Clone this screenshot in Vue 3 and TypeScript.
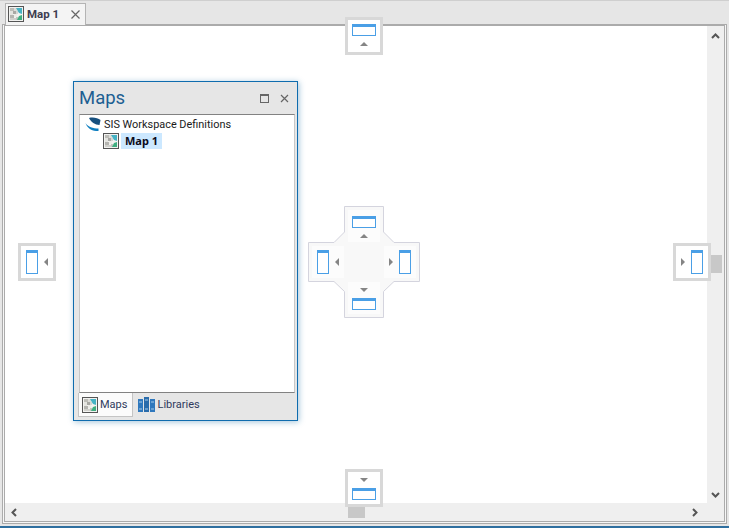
<script setup lang="ts">
// dock guides around the edge of the document well
const edgeGuides = ['top', 'left', 'right', 'bottom'] as const;

// rough little map thumbnail used on tabs and tree nodes
const mapCells = [
  { x: 2, y: 2, w: 4, h: 3, fill: '#bdbdb8' },
  { x: 6, y: 2, w: 3, h: 3, fill: '#dcdcd8' },
  { x: 2, y: 5, w: 3, h: 4, fill: '#e4e4e0' },
  { x: 5, y: 5, w: 3, h: 3, fill: '#a8a8a4' },
  { x: 8, y: 5, w: 2, h: 3, fill: '#d6d6d2' },
  { x: 2, y: 9, w: 4, h: 3, fill: '#b4b4b0' },
  { x: 6, y: 8, w: 3, h: 3, fill: '#ecece8' },
  { x: 2, y: 12, w: 6, h: 2, fill: '#d0d0cc' },
  { x: 8, y: 11, w: 2, h: 3, fill: '#c4c4c0' },
];
</script>

<template>
  <div class="app">
    <div class="tabstrip">
      <div class="doc-tab">
        <svg class="map-icon" width="16" height="16" viewBox="0 0 16 16">
          <rect x="0.5" y="0.5" width="15" height="15" fill="#f2f2f0" stroke="#555" />
          <rect v-for="(c, i) in mapCells" :key="i" :x="c.x" :y="c.y" :width="c.w" :height="c.h" :fill="c.fill" />
          <path d="M8 2H14V8L11 7Z" fill="#45b2c4" />
          <path d="M14 9V14H9L11 10Z" fill="#3fae80" />
        </svg>
        <span class="doc-tab-label">Map 1</span>
        <svg class="doc-close" width="9" height="9" viewBox="0 0 9 9">
          <path d="M0.5 0.5L8.5 8.5M8.5 0.5L0.5 8.5" stroke="#666" stroke-width="1.2" fill="none" />
        </svg>
      </div>
    </div>

    <div class="frame-outer">
      <div class="frame-inner">
        <div class="well-row">
          <div class="well"></div>
          <div class="vscroll">
            <svg width="9" height="6" viewBox="0 0 9 6"><path d="M1 5L4.5 1.5L8 5" stroke="#555" stroke-width="2" fill="none" /></svg>
            <div class="vthumb"></div>
            <svg width="9" height="6" viewBox="0 0 9 6"><path d="M1 1L4.5 4.5L8 1" stroke="#555" stroke-width="2" fill="none" /></svg>
          </div>
        </div>
        <div class="hscroll">
          <svg width="6" height="9" viewBox="0 0 6 9"><path d="M5 1L1.5 4.5L5 8" stroke="#555" stroke-width="2" fill="none" /></svg>
          <div class="hthumb"></div>
          <svg width="6" height="9" viewBox="0 0 6 9"><path d="M1 1L4.5 4.5L1 8" stroke="#555" stroke-width="2" fill="none" /></svg>
        </div>
      </div>
    </div>
    <div class="bottom-edge"></div>

    <!-- floating tool window -->
    <div class="float-win">
      <div class="float-head">
        <span class="float-title">Maps</span>
        <svg class="float-max" width="9" height="9" viewBox="0 0 9 9">
          <rect x="0.5" y="0.5" width="8" height="8" fill="none" stroke="#666" />
          <path d="M0 1.5H9" stroke="#666" />
        </svg>
        <svg class="float-close" width="9" height="9" viewBox="0 0 9 9">
          <path d="M1 1L8 8M8 1L1 8" stroke="#666" stroke-width="1.2" fill="none" />
        </svg>
      </div>
      <div class="tree">
        <div class="tree-root">
          <svg width="16" height="14" viewBox="0 0 16 14">
            <path d="M4 1C8 0 13 1 15.5 3L14.5 8C10 8 6 5 4 1Z" fill="#17507f" />
            <path d="M0.5 6C3 10 8 11.5 13.5 11.5L13.5 14C7 14.5 2 11 0.5 6Z" fill="#0f7fc0" />
          </svg>
          <span>SIS Workspace Definitions</span>
        </div>
        <div class="tree-node">
          <svg class="map-icon" width="16" height="16" viewBox="0 0 16 16">
            <rect x="0.5" y="0.5" width="15" height="15" fill="#f2f2f0" stroke="#555" />
            <rect v-for="(c, i) in mapCells" :key="i" :x="c.x" :y="c.y" :width="c.w" :height="c.h" :fill="c.fill" />
            <path d="M8 2H14V8L11 7Z" fill="#45b2c4" />
            <path d="M14 9V14H9L11 10Z" fill="#3fae80" />
          </svg>
          <span class="tree-selected">Map 1</span>
        </div>
      </div>
      <div class="float-tabs">
        <div class="float-tab active">
          <svg class="map-icon" width="16" height="16" viewBox="0 0 16 16">
            <rect x="0.5" y="0.5" width="15" height="15" fill="#f2f2f0" stroke="#555" />
            <rect v-for="(c, i) in mapCells" :key="i" :x="c.x" :y="c.y" :width="c.w" :height="c.h" :fill="c.fill" />
            <path d="M8 2H14V8L11 7Z" fill="#45b2c4" />
            <path d="M14 9V14H9L11 10Z" fill="#3fae80" />
          </svg>
          <span>Maps</span>
        </div>
        <div class="float-tab">
          <svg width="17" height="16" viewBox="0 0 17 16">
            <rect x="0" y="2" width="5" height="13" fill="#2f78bd" />
            <rect x="6" y="0" width="5" height="15" fill="#2a6cab" />
            <rect x="12" y="2" width="5" height="13" fill="#2f78bd" />
            <path d="M1 5H4M1 12H4M7 3H10M7 12H10M13 5H16M13 12H16" stroke="#a9cdea" />
          </svg>
          <span>Libraries</span>
        </div>
      </div>
    </div>

    <!-- single dock guides -->
    <div v-for="g in edgeGuides" :key="g" class="guide" :class="'guide-' + g">
      <div class="pane" :class="'pane-' + g"></div>
      <div class="arrow" :class="'arrow-' + g"></div>
    </div>

    <!-- centre dock cross -->
    <div class="cross">
      <svg class="cross-bg" width="112" height="112" viewBox="0 0 112 112">
        <path
          d="M36.5 0.5H75.5V26L86 36.5H111.5V75.5H86L75.5 85.5V111.5H36.5V85.5L26 75.5H0.5V36.5H26L36.5 26Z"
          fill="#f8f8f8"
          stroke="#d4d4de"
        />
      </svg>
      <div v-for="g in edgeGuides" :key="g" class="cross-cell" :class="'cell-' + g">
        <div class="pane" :class="'pane-' + g"></div>
        <div class="arrow" :class="'arrow-' + g"></div>
      </div>
    </div>
  </div>
</template>

<style scoped>
.app {
  width: 729px;
  height: 528px;
  position: relative;
  overflow: hidden;
  display: flex;
  flex-direction: column;
  background: #e6e6e6;
  font-family: Roboto, "Liberation Sans", sans-serif;
  color: #1a1a1a;
}

.tabstrip {
  height: 24px;
  flex: none;
  box-sizing: border-box;
  border-top: 1px solid #cfcfcf;
  padding: 2px 0 0 5px;
  display: flex;
  align-items: flex-start;
}

.doc-tab {
  width: 81px;
  height: 22px;
  flex: none;
  box-sizing: border-box;
  background: #f4f4f4;
  border: 1px solid #b4b4b4;
  border-bottom: none;
  display: flex;
  align-items: center;
  padding: 0 0 1px 2px;
  position: relative;
  z-index: 1;
}

.doc-tab-label {
  margin-left: 3px;
  font-size: 11.5px;
  font-weight: 700;
  color: #3d3d50;
  width: 44px;
  white-space: nowrap;
}

.map-icon {
  flex: none;
  display: block;
}

.frame-outer {
  flex: none;
  height: 500px;
  margin: 0 2px;
  box-sizing: border-box;
  border: 1px solid #ababab;
  padding: 0 1px 1px;
  background: #f6f6f6;
}

.frame-inner {
  height: 100%;
  box-sizing: border-box;
  border: 1px solid #ababab;
  display: flex;
  flex-direction: column;
  background: #fff;
}

.well-row {
  flex: 1;
  display: flex;
  min-height: 0;
}

.well {
  flex: 1;
  background: #fff;
}

.vscroll {
  width: 17px;
  flex: none;
  background: #efefef;
  display: flex;
  flex-direction: column;
  align-items: center;
  justify-content: space-between;
  padding: 7px 0 5px;
  box-sizing: border-box;
  position: relative;
}

.vthumb {
  position: absolute;
  left: 0;
  top: 229px;
  width: 15px;
  height: 18px;
  background: #c8c8c8;
}

.hscroll {
  height: 18px;
  flex: none;
  background: #efefef;
  display: flex;
  align-items: center;
  justify-content: space-between;
  padding: 0 26px 0 6px;
  box-sizing: border-box;
  position: relative;
}

.hthumb {
  position: absolute;
  left: 343px;
  top: 2px;
  width: 17px;
  height: 13px;
  background: #c8c8c8;
}

.bottom-edge {
  flex: none;
  height: 2px;
  margin-top: 2px;
  background: #2f6f9f;
}

.float-win {
  position: absolute;
  left: 73px;
  top: 81px;
  width: 225px;
  height: 340px;
  box-sizing: border-box;
  border: 1px solid #0f6cae;
  background: #e6e6e6;
  box-shadow: 1px 1px 6px rgba(28, 110, 164, 0.4);
  display: flex;
  flex-direction: column;
  padding: 0 2px 0 5px;
}

.float-head {
  height: 32px;
  flex: none;
  display: flex;
  align-items: center;
}

.float-title {
  flex: 1;
  font-size: 18.5px;
  color: #1d5f92;
  line-height: 36px;
}

.float-max {
  margin-right: 11px;
}

.float-close {
  margin-right: 6px;
}

.tree {
  flex: 1;
  background: #fff;
  border-top: 1px solid #828282;
  border-bottom: 1px solid #828282;
  border-left: 1px solid #c8c8c8;
  border-right: 1px solid #c8c8c8;
  padding: 1px 0 0 5px;
  min-height: 0;
}

.tree-root {
  display: flex;
  align-items: center;
  gap: 3px;
  height: 16px;
  font-size: 10.9px;
  white-space: nowrap;
}

.tree-node {
  display: flex;
  align-items: center;
  height: 16px;
  margin-left: 18px;
  margin-top: 1px;
}

.tree-selected {
  background: #cce8ff;
  font-family: "Noto Sans", sans-serif;
  font-weight: 700;
  font-size: 11px;
  line-height: 15px;
  height: 16px;
  padding: 0 4px;
  margin-left: 2px;
  color: #0a0a1a;
}

.float-tabs {
  height: 27px;
  flex: none;
  display: flex;
  align-items: flex-start;
  gap: 5px;
  margin-left: -1px;
}

.float-tab {
  height: 23px;
  display: flex;
  align-items: center;
  gap: 2px;
  font-size: 11px;
  color: #2f3a5c;
  white-space: nowrap;
}

.float-tab.active {
  background: #fbfbfb;
  border: 1px solid #c4c4c4;
  border-top: none;
  box-sizing: border-box;
  padding: 0 5px 0 3px;
  height: 24px;
}

.guide {
  position: absolute;
  width: 38px;
  height: 38px;
  box-sizing: border-box;
  background: #fff;
  border: 3px solid #d8d8d8;
}

.guide-top {
  left: 345px;
  top: 17px;
}

.guide-left {
  left: 18px;
  top: 243px;
}

.guide-right {
  left: 673px;
  top: 243px;
}

.guide-bottom {
  left: 345px;
  top: 469px;
}

.pane {
  position: absolute;
  box-sizing: border-box;
  background: #fff;
  border: 1px solid #4a9fe6;
}

.pane-top,
.pane-bottom {
  width: 24px;
  height: 12px;
  border-top-width: 3px;
  left: 4px;
}

.pane-left,
.pane-right {
  width: 12px;
  height: 24px;
  border-top-width: 3px;
  top: 4px;
}

.pane-top {
  top: 4px;
}

.pane-bottom {
  top: 16px;
}

.pane-left {
  left: 5px;
}

.pane-right {
  left: 15px;
}

.arrow {
  position: absolute;
  width: 0;
  height: 0;
  border-style: solid;
  border-color: transparent;
}

.arrow-top {
  left: 12px;
  top: 22px;
  border-width: 0 4px 4px;
  border-bottom-color: #858585;
}

.arrow-bottom {
  left: 12px;
  top: 6px;
  border-width: 4px 4px 0;
  border-top-color: #858585;
}

.arrow-left {
  left: 23px;
  top: 12px;
  border-width: 4px 4px 4px 0;
  border-right-color: #858585;
}

.arrow-right {
  left: 5px;
  top: 12px;
  border-width: 4px 0 4px 4px;
  border-left-color: #858585;
}

.cross {
  position: absolute;
  left: 308px;
  top: 206px;
  width: 112px;
  height: 112px;
}

.cross-bg {
  position: absolute;
  left: 0;
  top: 0;
}

.cross-cell {
  position: absolute;
  width: 32px;
  height: 32px;
  background: #fcfcfc;
}

.cell-top {
  left: 40px;
  top: 4px;
}

.cell-bottom {
  left: 40px;
  top: 76px;
}

.cell-left {
  left: 4px;
  top: 40px;
}

.cell-right {
  left: 76px;
  top: 40px;
}

.cell-top .pane-top {
  top: 6px;
}

.cell-top .arrow-top {
  top: 24px;
}

.cell-bottom .pane-bottom {
  top: 16px;
}

.cell-bottom .arrow-bottom {
  top: 6px;
}

.cell-left .pane-left {
  left: 5px;
}

.cell-left .arrow-left {
  left: 23px;
}

.cell-right .pane-right {
  left: 15px;
}

.cell-right .arrow-right {
  left: 5px;
}
</style>
